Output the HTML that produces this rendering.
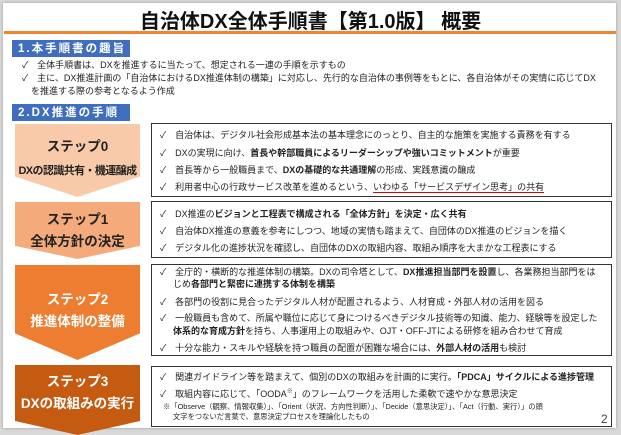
<!DOCTYPE html>
<html><head><meta charset="utf-8"><style>
*{margin:0;padding:0;box-sizing:border-box}
body{width:621px;height:431px;background:#d9d9d9;font-family:"Liberation Sans","Noto Sans CJK JP",sans-serif;position:relative;overflow:hidden;color:#222}
.slide{position:absolute;left:3px;top:3px;width:613px;height:425px;background:#fff;box-shadow:0 0 3px #999}
.a{position:absolute;white-space:nowrap}
.title{left:0;width:621px;top:5px;text-align:center;font-size:20px;font-weight:bold;color:#111}
.oline{left:4px;top:31px;width:612px;height:3px;background:#f0852c}
.sec{position:absolute;left:12px;height:17px;background:#3f6ebf;color:#fff;font-weight:bold;font-size:11.5px;letter-spacing:2px;padding:1px 0 0 6px;line-height:16px}
.t{font-size:9px;line-height:12px}
.n{font-size:7.3px;line-height:10px}
.chev{position:absolute;left:15px;width:125px;text-align:center;font-weight:bold}
.box{position:absolute;left:151px;width:461px;border:1px solid #333;background:#fff}
b{font-weight:bold}
</style></head><body>
<div class="slide"></div>
<div class="a title">自治体DX全体手順書【第1.0版】 概要</div>
<div class="a oline"></div>
<div class="sec" style="top:40px;width:118px">1.本手順書の趣旨</div>
<div class="a t" style="left:22px;top:59px">✓　全体手順書は、DXを推進するに当たって、想定される一連の手順を示すもの</div>
<div class="a t" style="left:22px;top:72px">✓　主に、DX推進計画の「自治体におけるDX推進体制の構築」に対応し、先行的な自治体の事例等をもとに、各自治体がその実情に応じてDX</div>
<div class="a t" style="left:31px;top:85px">を推進する際の参考となるよう作成</div>
<div class="sec" style="top:104px;width:118px">2.DX推進の手順</div>

<div class="chev" style="top:124px;height:73px;background:#f8caa9;clip-path:polygon(0 0,100% 0,100% 72%,50% 100%,0 72%)"><div style="font-size:13.5px;margin-top:11px">ステップ0</div><div style="font-size:11px;letter-spacing:-0.6px;margin-top:7px;white-space:nowrap">DXの認識共有・機運醸成</div></div>
<div class="box" style="top:123px;height:74px"></div>
<div class="a t" style="left:160px;top:129px">✓　自治体は、デジタル社会形成基本法の基本理念にのっとり、自主的な施策を実施する責務を有する</div>
<div class="a t" style="left:160px;top:147px">✓　DXの実現に向け、<b>首長や幹部職員によるリーダーシップや強いコミットメント</b>が重要</div>
<div class="a t" style="left:160px;top:164px">✓　首長等から一般職員まで、<b>DXの基礎的な共通理解</b>の形成、実践意識の醸成</div>
<div class="a t" style="left:160px;top:181px">✓　利用者中心の行政サービス改革を進めるという、<span style="border-bottom:1px solid #d00">いわゆる「サービスデザイン思考」の共有</span></div>

<div class="chev" style="top:202px;height:57px;background:#f4aa7a;clip-path:polygon(0 0,100% 0,100% 77%,50% 100%,0 77%)"><div style="font-size:13.5px;margin-top:6px">ステップ1</div><div style="font-size:13.5px;margin-top:2px">全体方針の決定</div></div>
<div class="box" style="top:201px;height:57px"></div>
<div class="a t" style="left:160px;top:208px">✓　DX推進の<b>ビジョンと工程表で構成される「全体方針」を決定・広く共有</b></div>
<div class="a t" style="left:160px;top:225px">✓　自治体DX推進の意義を参考にしつつ、地域の実情も踏まえて、自団体のDX推進のビジョンを描く</div>
<div class="a t" style="left:160px;top:242px">✓　デジタル化の進捗状況を確認し、自団体のDXの取組内容、取組み順序を大まかな工程表にする</div>

<div class="chev" style="top:265px;height:95px;background:#ec7d31;color:#fff;clip-path:polygon(0 0,100% 0,100% 72%,50% 100%,0 72%)"><div style="font-size:13.5px;margin-top:23px">ステップ2</div><div style="font-size:13.5px;margin-top:2px">推進体制の整備</div></div>
<div class="box" style="top:264px;height:92px"></div>
<div class="a t" style="left:160px;top:266px">✓　全庁的・横断的な推進体制の構築。DXの司令塔として、<b>DX推進担当部門を設置</b>し、各業務担当部門をは</div>
<div class="a t" style="left:173px;top:278px">じめ<b>各部門と緊密に連携する体制を構築</b></div>
<div class="a t" style="left:160px;top:296px">✓　各部門の役割に見合ったデジタル人材が配置されるよう、人材育成・外部人材の活用を図る</div>
<div class="a t" style="left:160px;top:312px">✓　一般職員も含めて、所属や職位に応じて身につけるべきデジタル技術等の知識、能力、経験等を設定した</div>
<div class="a t" style="left:173px;top:325px"><b>体系的な育成方針</b>を持ち、人事運用上の取組みや、OJT・OFF-JTによる研修を組み合わせて育成</div>
<div class="a t" style="left:160px;top:342px">✓　十分な能力・スキルや経験を持つ職員の配置が困難な場合には、<b>外部人材の活用</b>も検討</div>

<div class="chev" style="top:365px;height:70px;background:#c55a11;color:#fff;clip-path:polygon(0 0,100% 0,100% 80%,50% 100%,0 80%)"><div style="font-size:13.5px;margin-top:5px">ステップ3</div><div style="font-size:13.5px;margin-top:2px">DXの取組みの実行</div></div>
<div class="box" style="top:366px;height:61px"></div>
<div class="a t" style="left:160px;top:371px">✓　関連ガイドライン等を踏まえて、個別のDXの取組みを計画的に実行。<b>「PDCA」サイクルによる進捗管理</b></div>
<div class="a t" style="left:160px;top:386px">✓　取組内容に応じて、「OODA<span style="font-size:6px;vertical-align:super">※</span>」のフレームワークを活用した柔軟で速やかな意思決定</div>
<div class="a n" style="left:163px;top:402px">※「Observe（観察、情報収集）」、「Orient（状況、方向性判断）」、「Decide（意思決定）」、「Act（行動、実行）」の頭</div>
<div class="a n" style="left:173px;top:412px">文字をつないだ言葉で、意思決定プロセスを理論化したもの</div>
<div class="a" style="left:601px;top:412px;font-size:12px;color:#444">2</div>
</body></html>
